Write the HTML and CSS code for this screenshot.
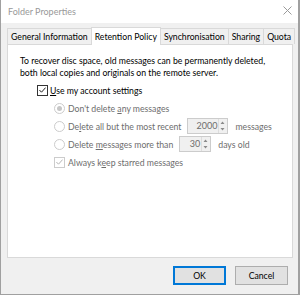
FILE: index.html
```html
<!DOCTYPE html>
<html>
<head>
	<title>Folder Properties</title>
	<link rel="stylesheet" href="styles.css">
</head>
<body>
<div class="window">
	<div class="titlebar">
		<span class="title">Folder Properties</span>
		<svg class="close" width="9" height="9" viewBox="0 0 9 9"><path d="M0.5 0.5 L8.5 8.5 M8.5 0.5 L0.5 8.5" stroke="#9a9a9a" stroke-width="1" fill="none"/></svg>
	</div>
	<div class="body">
		<div class="tabs">
			<div class="tab">General Information</div>
			<div class="tab selected">Retention Policy</div>
			<div class="tab">Synchronisation</div>
			<div class="tab">Sharing</div>
			<div class="tab">Quota</div>
		</div>
		<div class="panel">
			<p class="intro">To recover disc space, old messages can be permanently deleted,<br>both local copies and originals on the remote server.</p>

			<div class="row main">
				<span class="check"><svg width="7" height="6" viewBox="0 0 7 6"><path d="M0.4 3 L2.5 5.2 L6.6 0.6" stroke="#222" stroke-width="1" fill="none"/></svg></span>
				<span><u>U</u>se my account settings</span>
			</div>

			<div class="options">
				<div class="row off">
					<span class="radio"><span class="dot"></span></span>
					<span>Don't delete <u>a</u>ny messages</span>
				</div>
				<div class="row off">
					<span class="radio"></span>
					<span>De<u>l</u>ete all but the most recent</span>
					<span class="spin wide"><span class="val">2000</span><span class="arrows"><svg width="7" height="14" viewBox="0 0 7 14"><path d="M1.5 5 L3.5 2.5 L5.5 5 Z M1.5 9 L3.5 11.5 L5.5 9 Z" fill="#8a8a8a"/></svg></span></span>
					<span class="after">messages</span>
				</div>
				<div class="row off">
					<span class="radio"></span>
					<span>Delete <u>m</u>essages more than</span>
					<span class="spin"><span class="val">30</span><span class="arrows"><svg width="7" height="14" viewBox="0 0 7 14"><path d="M1.5 5 L3.5 2.5 L5.5 5 Z M1.5 9 L3.5 11.5 L5.5 9 Z" fill="#8a8a8a"/></svg></span></span>
					<span class="after">days old</span>
				</div>
				<div class="row off">
					<span class="check dis"><svg width="7" height="6" viewBox="0 0 7 6"><path d="M0.4 3 L2.5 5.2 L6.6 0.6" stroke="#b5b5b5" stroke-width="1" fill="none"/></svg></span>
					<span>Always k<u>e</u>ep starred messages</span>
				</div>
			</div>
		</div>
		<div class="buttons">
			<div class="btn default">OK</div>
			<div class="btn">Cancel</div>
		</div>
	</div>
</div>
</body>
</html>
```

FILE: styles.css
```css
body
{
	margin: 0;
	font-family: "Lato", "Noto Sans", sans-serif;
	font-size: 8.7px;
	color: #000000;
	white-space: nowrap;
}
.window
{
	width: 300px;
	height: 295px;
	box-sizing: border-box;
	border: 1px solid #a0a0a0;
	border-top: none;
	border-right-width: 2px;
	background-color: #f0f0f0;
	display: flex;
	flex-direction: column;
	overflow: hidden;
}
.titlebar
{
	height: 23px;
	background-color: #ffffff;
	display: flex;
	align-items: center;
	justify-content: space-between;
	padding: 0 6px 0 7px;
}
.title
{
	color: #999999;
	font-size: 9px;
	margin-top: -1px;
}
.close
{
	margin-top: -2px;
}
.body
{
	flex: 1;
	display: flex;
	flex-direction: column;
	padding: 5px 5px 0 6px;
}
.tabs
{
	display: flex;
	height: 16px;
	align-items: flex-end;
	position: relative;
	z-index: 1;
}
.tab
{
	height: 15px;
	line-height: 15px;
	padding: 0 3px;
	border: 1px solid #d9d9d9;
	border-bottom: none;
	margin-right: -1px;
	background-color: #f0f0f0;
}
.tab.selected
{
	height: 17px;
	line-height: 17px;
	background-color: #ffffff;
	padding: 0 3px;
	margin-bottom: -1px;
}
.panel
{
	height: 214px;
	box-sizing: border-box;
	background-color: #ffffff;
	border: 1px solid #d9d9d9;
	padding: 0 10px 0 12px;
}
.intro
{
	margin: 10px 0 3px 0;
	line-height: 11.5px;
}
.row
{
	display: flex;
	align-items: center;
	height: 18px;
}
.main
{
	margin-left: 17px;
}
.options
{
	margin-left: 34px;
}
.off
{
	color: #6d6d6d;
}
.check
{
	width: 9px;
	height: 9px;
	border: 1px solid #333333;
	margin-right: 2px;
	display: flex;
	align-items: center;
	justify-content: center;
	background-color: #ffffff;
}
.check.dis
{
	border-color: #cccccc;
	margin-right: 3px;
}
.radio
{
	width: 9px;
	height: 9px;
	border: 1px solid #cccccc;
	border-radius: 50%;
	margin-right: 3px;
	display: flex;
	align-items: center;
	justify-content: center;
}
.dot
{
	width: 5px;
	height: 5px;
	border-radius: 50%;
	background-color: #c6c6c6;
}
.spin
{
	display: flex;
	width: 32px;
	height: 16px;
	border: 1px solid #cccccc;
	background-color: #f0f0f0;
	margin-left: 6px;
	box-sizing: border-box;
}
.spin.wide
{
	width: 41px;
}
.val
{
	flex: 1;
	text-align: right;
	line-height: 14px;
	padding-right: 1px;
	font-size: 9px;
}
.arrows
{
	width: 8px;
	border-left: 1px solid #dddddd;
	display: flex;
	align-items: center;
}
.after
{
	margin-left: 7px;
}
.buttons
{
	display: flex;
	justify-content: flex-end;
	gap: 9px;
	margin-top: 8px;
	padding-right: 5px;
}
.btn
{
	width: 53px;
	height: 19px;
	box-sizing: border-box;
	border: 1px solid #adadad;
	background-color: #e1e1e1;
	text-align: center;
	line-height: 17px;
}
.btn.default
{
	border: 1px solid #0078d7;
	box-shadow: inset 0 0 0 1px #0078d7;
}
```
